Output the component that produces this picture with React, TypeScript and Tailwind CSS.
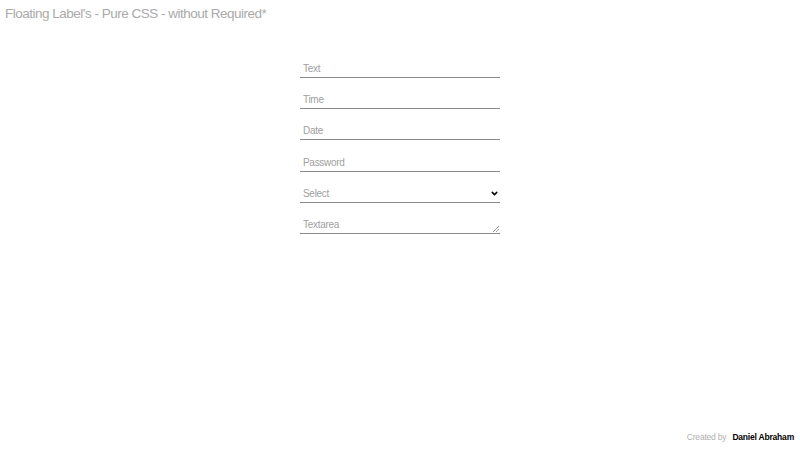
import { ChevronDown } from "lucide-react"

const fields = ["Text", "Time", "Date", "Password"]

export default function App() {
  return (
    <div className="min-h-[450px] flex flex-col bg-white font-['Liberation_Sans',Arial,sans-serif]">
      {/* Title */}
      <h1 className="pl-[5px] pt-[5px] text-[13.5px] leading-[18px] tracking-[-0.5px] text-[#aaaaaa] font-normal">
        Floating Label's - Pure CSS - without Required*
      </h1>

      {/* Form */}
      <form className="mx-auto mt-[24px] w-[200px] flex flex-col">
        {fields.map((f, i) => (
          <div
            key={f}
            className={`${i === 3 ? "h-[32px]" : "h-[31px]"} border-b border-[#8a8a8a] flex items-end px-[3px] pb-[2px]`}
          >
            <span className="text-[10px] leading-[13px] tracking-[-0.3px] text-[#a0a0a0]">{f}</span>
          </div>
        ))}
        <div className="h-[31px] border-b border-[#8a8a8a] flex items-end justify-between pl-[3px] pr-[1px] pb-[2px]">
          <span className="text-[10px] leading-[13px] tracking-[-0.3px] text-[#a0a0a0]">Select</span>
          <ChevronDown className="w-[9px] h-[9px] mb-[2px] text-black" strokeWidth={4} />
        </div>
        <div className="h-[31px] border-b border-[#8a8a8a] flex items-end px-[3px] pb-[2px] relative">
          <span className="text-[10px] leading-[13px] tracking-[-0.3px] text-[#a0a0a0]">Textarea</span>
          <svg className="absolute right-[1px] bottom-[1px]" width="6" height="6" viewBox="0 0 6 6">
            <path d="M0 6 L6 0 M3 6 L6 3" stroke="#999" strokeWidth="1" />
          </svg>
        </div>
      </form>

      {/* Footer */}
      <footer className="mt-auto self-end pr-[6px] pb-[7px] flex items-center gap-[6px] text-[8.5px] leading-[12px] tracking-[-0.2px]">
        <span className="text-[#b0b0b0]">Created by</span>
        <span className="font-bold text-black">Daniel Abraham</span>
      </footer>
    </div>
  )
}
